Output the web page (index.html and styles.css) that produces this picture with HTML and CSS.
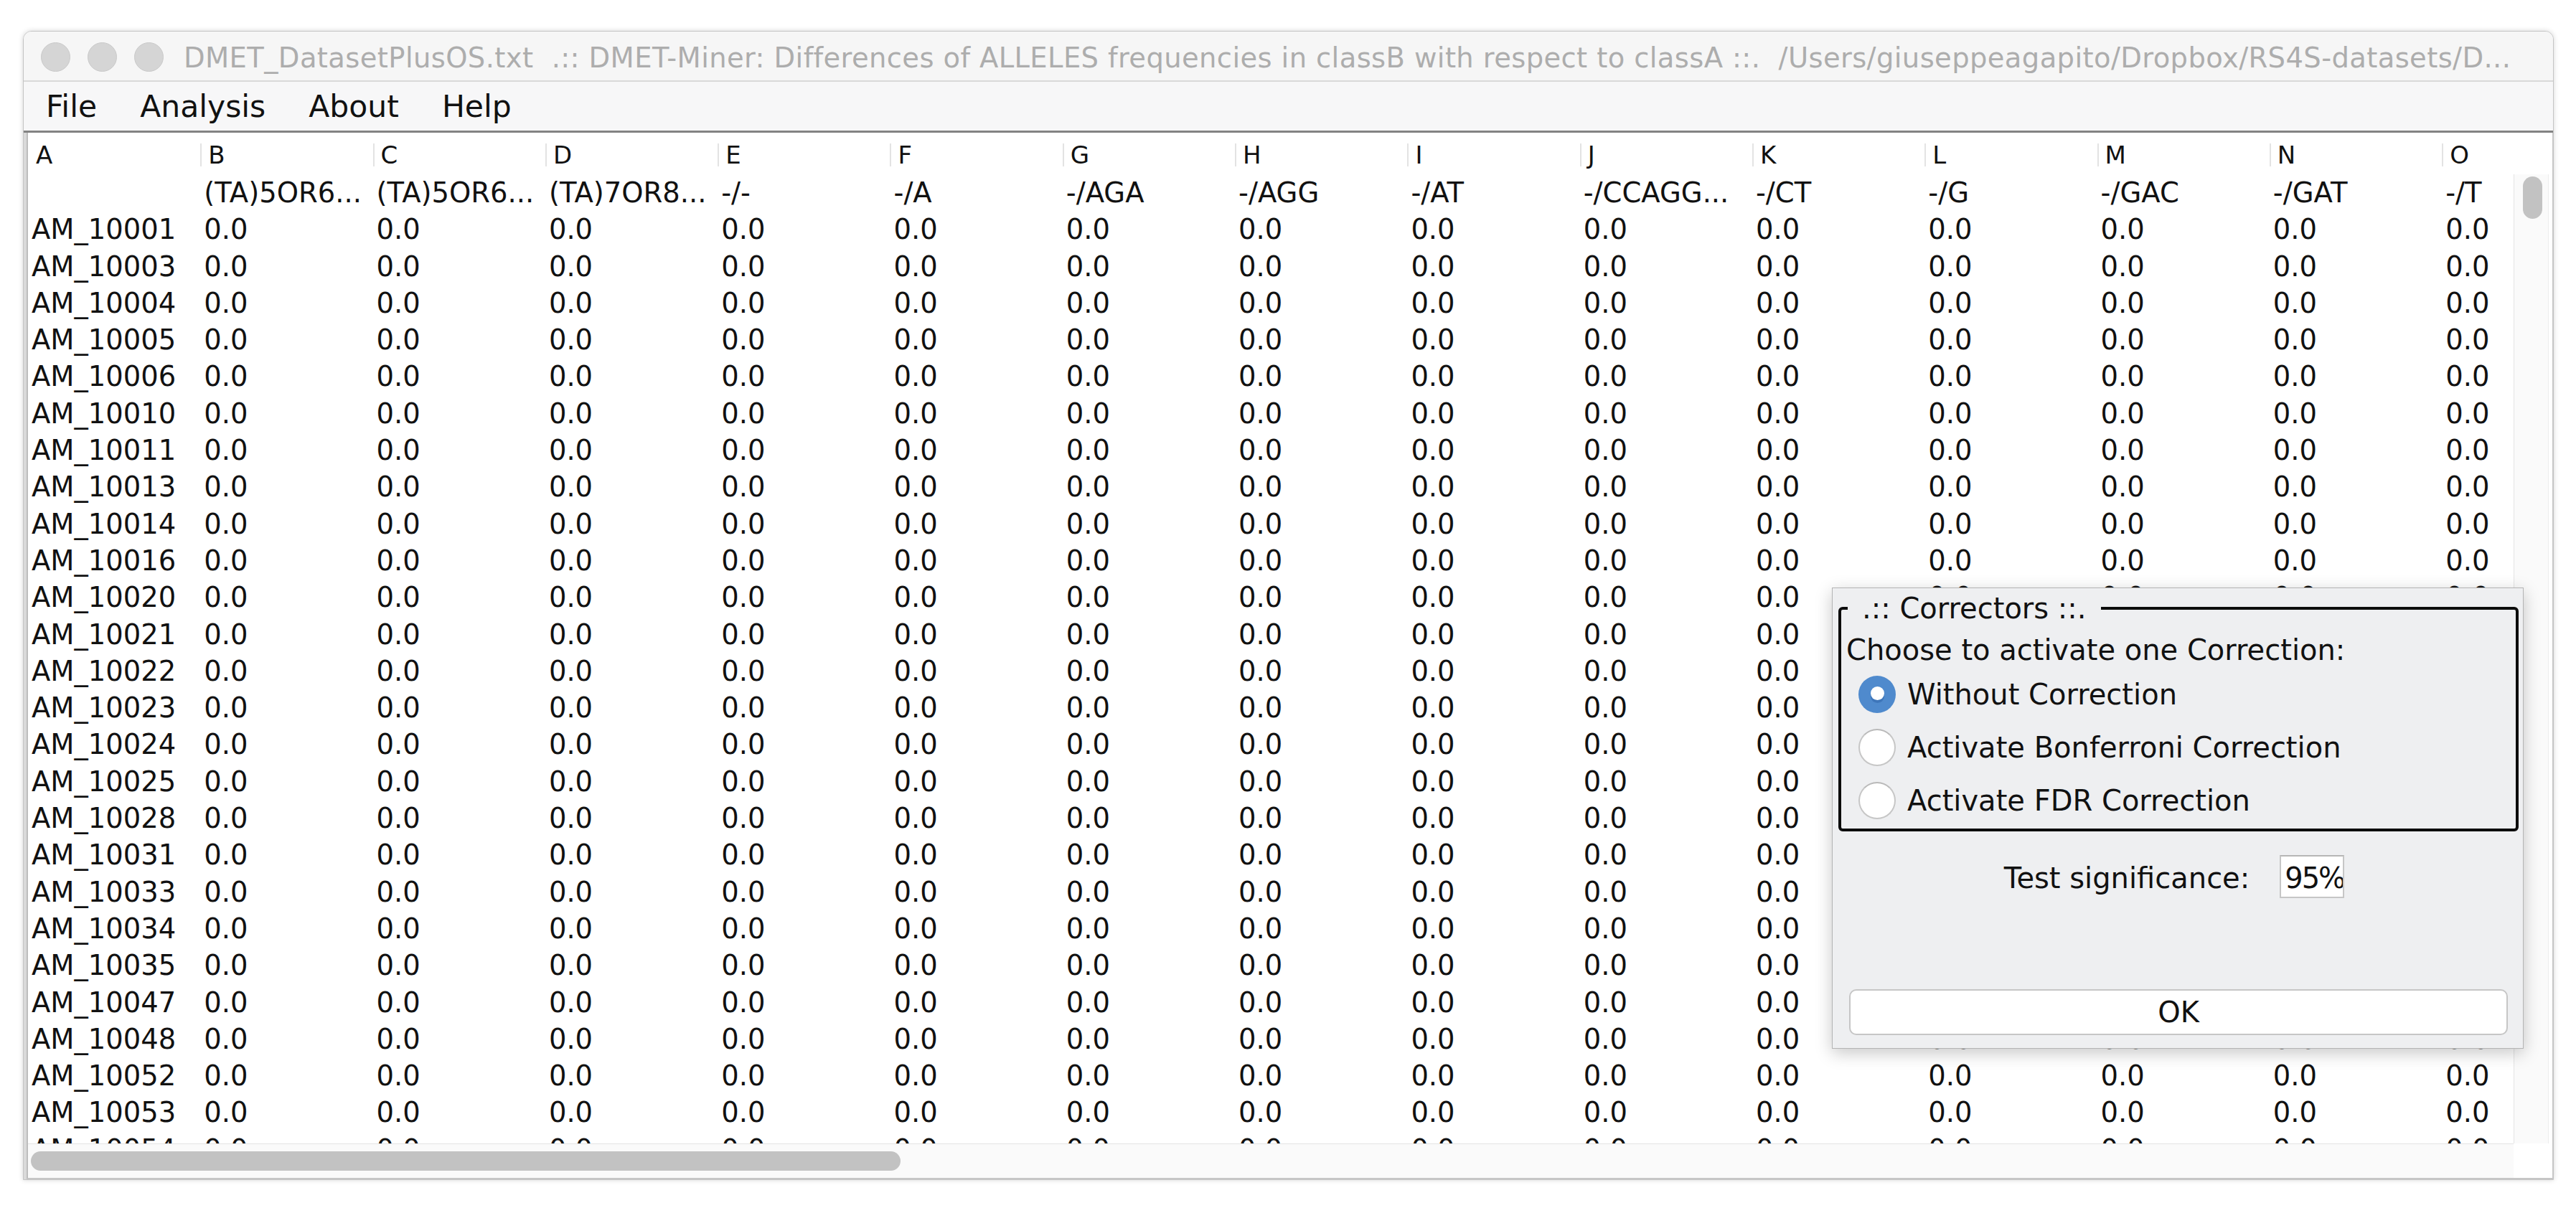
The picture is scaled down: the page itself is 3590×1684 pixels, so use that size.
FILE: index.html
```html
<!DOCTYPE html>
<html>
<head>
<meta charset="utf-8">
<link rel="stylesheet" href="styles.css">
</head>
<body>
<div class="window">
  <div class="titlebar">
    <div class="lights"><span class="light"></span><span class="light"></span><span class="light"></span></div>
    <div class="title">DMET_DatasetPlusOS.txt  .:: DMET-Miner: Differences of ALLELES frequencies in classB with respect to classA ::.  /Users/giuseppeagapito/Dropbox/RS4S-datasets/D...</div>
  </div>
  <div class="menubar">
    <span class="menu">File</span><span class="menu">Analysis</span><span class="menu">About</span><span class="menu">Help</span>
  </div>
  <div class="content">
    <div class="scrollpane">
      <div class="header">
        <div class="hcell">A</div><div class="hcell">B</div><div class="hcell">C</div><div class="hcell">D</div><div class="hcell">E</div><div class="hcell">F</div><div class="hcell">G</div><div class="hcell">H</div><div class="hcell">I</div><div class="hcell">J</div><div class="hcell">K</div><div class="hcell">L</div><div class="hcell">M</div><div class="hcell">N</div><div class="hcell">O</div>
      </div>
      <div class="body">
        <div class="viewport">
          <div class="row"><span class="cell"></span><span class="cell">(TA)5OR6...</span><span class="cell">(TA)5OR6...</span><span class="cell">(TA)7OR8...</span><span class="cell">-/-</span><span class="cell">-/A</span><span class="cell">-/AGA</span><span class="cell">-/AGG</span><span class="cell">-/AT</span><span class="cell">-/CCAGG...</span><span class="cell">-/CT</span><span class="cell">-/G</span><span class="cell">-/GAC</span><span class="cell">-/GAT</span><span class="cell">-/T</span></div>
          <div class="row"><span class="cell">AM_10001</span><span class="cell">0.0</span><span class="cell">0.0</span><span class="cell">0.0</span><span class="cell">0.0</span><span class="cell">0.0</span><span class="cell">0.0</span><span class="cell">0.0</span><span class="cell">0.0</span><span class="cell">0.0</span><span class="cell">0.0</span><span class="cell">0.0</span><span class="cell">0.0</span><span class="cell">0.0</span><span class="cell">0.0</span></div>
          <div class="row"><span class="cell">AM_10003</span><span class="cell">0.0</span><span class="cell">0.0</span><span class="cell">0.0</span><span class="cell">0.0</span><span class="cell">0.0</span><span class="cell">0.0</span><span class="cell">0.0</span><span class="cell">0.0</span><span class="cell">0.0</span><span class="cell">0.0</span><span class="cell">0.0</span><span class="cell">0.0</span><span class="cell">0.0</span><span class="cell">0.0</span></div>
          <div class="row"><span class="cell">AM_10004</span><span class="cell">0.0</span><span class="cell">0.0</span><span class="cell">0.0</span><span class="cell">0.0</span><span class="cell">0.0</span><span class="cell">0.0</span><span class="cell">0.0</span><span class="cell">0.0</span><span class="cell">0.0</span><span class="cell">0.0</span><span class="cell">0.0</span><span class="cell">0.0</span><span class="cell">0.0</span><span class="cell">0.0</span></div>
          <div class="row"><span class="cell">AM_10005</span><span class="cell">0.0</span><span class="cell">0.0</span><span class="cell">0.0</span><span class="cell">0.0</span><span class="cell">0.0</span><span class="cell">0.0</span><span class="cell">0.0</span><span class="cell">0.0</span><span class="cell">0.0</span><span class="cell">0.0</span><span class="cell">0.0</span><span class="cell">0.0</span><span class="cell">0.0</span><span class="cell">0.0</span></div>
          <div class="row"><span class="cell">AM_10006</span><span class="cell">0.0</span><span class="cell">0.0</span><span class="cell">0.0</span><span class="cell">0.0</span><span class="cell">0.0</span><span class="cell">0.0</span><span class="cell">0.0</span><span class="cell">0.0</span><span class="cell">0.0</span><span class="cell">0.0</span><span class="cell">0.0</span><span class="cell">0.0</span><span class="cell">0.0</span><span class="cell">0.0</span></div>
          <div class="row"><span class="cell">AM_10010</span><span class="cell">0.0</span><span class="cell">0.0</span><span class="cell">0.0</span><span class="cell">0.0</span><span class="cell">0.0</span><span class="cell">0.0</span><span class="cell">0.0</span><span class="cell">0.0</span><span class="cell">0.0</span><span class="cell">0.0</span><span class="cell">0.0</span><span class="cell">0.0</span><span class="cell">0.0</span><span class="cell">0.0</span></div>
          <div class="row"><span class="cell">AM_10011</span><span class="cell">0.0</span><span class="cell">0.0</span><span class="cell">0.0</span><span class="cell">0.0</span><span class="cell">0.0</span><span class="cell">0.0</span><span class="cell">0.0</span><span class="cell">0.0</span><span class="cell">0.0</span><span class="cell">0.0</span><span class="cell">0.0</span><span class="cell">0.0</span><span class="cell">0.0</span><span class="cell">0.0</span></div>
          <div class="row"><span class="cell">AM_10013</span><span class="cell">0.0</span><span class="cell">0.0</span><span class="cell">0.0</span><span class="cell">0.0</span><span class="cell">0.0</span><span class="cell">0.0</span><span class="cell">0.0</span><span class="cell">0.0</span><span class="cell">0.0</span><span class="cell">0.0</span><span class="cell">0.0</span><span class="cell">0.0</span><span class="cell">0.0</span><span class="cell">0.0</span></div>
          <div class="row"><span class="cell">AM_10014</span><span class="cell">0.0</span><span class="cell">0.0</span><span class="cell">0.0</span><span class="cell">0.0</span><span class="cell">0.0</span><span class="cell">0.0</span><span class="cell">0.0</span><span class="cell">0.0</span><span class="cell">0.0</span><span class="cell">0.0</span><span class="cell">0.0</span><span class="cell">0.0</span><span class="cell">0.0</span><span class="cell">0.0</span></div>
          <div class="row"><span class="cell">AM_10016</span><span class="cell">0.0</span><span class="cell">0.0</span><span class="cell">0.0</span><span class="cell">0.0</span><span class="cell">0.0</span><span class="cell">0.0</span><span class="cell">0.0</span><span class="cell">0.0</span><span class="cell">0.0</span><span class="cell">0.0</span><span class="cell">0.0</span><span class="cell">0.0</span><span class="cell">0.0</span><span class="cell">0.0</span></div>
          <div class="row"><span class="cell">AM_10020</span><span class="cell">0.0</span><span class="cell">0.0</span><span class="cell">0.0</span><span class="cell">0.0</span><span class="cell">0.0</span><span class="cell">0.0</span><span class="cell">0.0</span><span class="cell">0.0</span><span class="cell">0.0</span><span class="cell">0.0</span><span class="cell">0.0</span><span class="cell">0.0</span><span class="cell">0.0</span><span class="cell">0.0</span></div>
          <div class="row"><span class="cell">AM_10021</span><span class="cell">0.0</span><span class="cell">0.0</span><span class="cell">0.0</span><span class="cell">0.0</span><span class="cell">0.0</span><span class="cell">0.0</span><span class="cell">0.0</span><span class="cell">0.0</span><span class="cell">0.0</span><span class="cell">0.0</span><span class="cell">0.0</span><span class="cell">0.0</span><span class="cell">0.0</span><span class="cell">0.0</span></div>
          <div class="row"><span class="cell">AM_10022</span><span class="cell">0.0</span><span class="cell">0.0</span><span class="cell">0.0</span><span class="cell">0.0</span><span class="cell">0.0</span><span class="cell">0.0</span><span class="cell">0.0</span><span class="cell">0.0</span><span class="cell">0.0</span><span class="cell">0.0</span><span class="cell">0.0</span><span class="cell">0.0</span><span class="cell">0.0</span><span class="cell">0.0</span></div>
          <div class="row"><span class="cell">AM_10023</span><span class="cell">0.0</span><span class="cell">0.0</span><span class="cell">0.0</span><span class="cell">0.0</span><span class="cell">0.0</span><span class="cell">0.0</span><span class="cell">0.0</span><span class="cell">0.0</span><span class="cell">0.0</span><span class="cell">0.0</span><span class="cell">0.0</span><span class="cell">0.0</span><span class="cell">0.0</span><span class="cell">0.0</span></div>
          <div class="row"><span class="cell">AM_10024</span><span class="cell">0.0</span><span class="cell">0.0</span><span class="cell">0.0</span><span class="cell">0.0</span><span class="cell">0.0</span><span class="cell">0.0</span><span class="cell">0.0</span><span class="cell">0.0</span><span class="cell">0.0</span><span class="cell">0.0</span><span class="cell">0.0</span><span class="cell">0.0</span><span class="cell">0.0</span><span class="cell">0.0</span></div>
          <div class="row"><span class="cell">AM_10025</span><span class="cell">0.0</span><span class="cell">0.0</span><span class="cell">0.0</span><span class="cell">0.0</span><span class="cell">0.0</span><span class="cell">0.0</span><span class="cell">0.0</span><span class="cell">0.0</span><span class="cell">0.0</span><span class="cell">0.0</span><span class="cell">0.0</span><span class="cell">0.0</span><span class="cell">0.0</span><span class="cell">0.0</span></div>
          <div class="row"><span class="cell">AM_10028</span><span class="cell">0.0</span><span class="cell">0.0</span><span class="cell">0.0</span><span class="cell">0.0</span><span class="cell">0.0</span><span class="cell">0.0</span><span class="cell">0.0</span><span class="cell">0.0</span><span class="cell">0.0</span><span class="cell">0.0</span><span class="cell">0.0</span><span class="cell">0.0</span><span class="cell">0.0</span><span class="cell">0.0</span></div>
          <div class="row"><span class="cell">AM_10031</span><span class="cell">0.0</span><span class="cell">0.0</span><span class="cell">0.0</span><span class="cell">0.0</span><span class="cell">0.0</span><span class="cell">0.0</span><span class="cell">0.0</span><span class="cell">0.0</span><span class="cell">0.0</span><span class="cell">0.0</span><span class="cell">0.0</span><span class="cell">0.0</span><span class="cell">0.0</span><span class="cell">0.0</span></div>
          <div class="row"><span class="cell">AM_10033</span><span class="cell">0.0</span><span class="cell">0.0</span><span class="cell">0.0</span><span class="cell">0.0</span><span class="cell">0.0</span><span class="cell">0.0</span><span class="cell">0.0</span><span class="cell">0.0</span><span class="cell">0.0</span><span class="cell">0.0</span><span class="cell">0.0</span><span class="cell">0.0</span><span class="cell">0.0</span><span class="cell">0.0</span></div>
          <div class="row"><span class="cell">AM_10034</span><span class="cell">0.0</span><span class="cell">0.0</span><span class="cell">0.0</span><span class="cell">0.0</span><span class="cell">0.0</span><span class="cell">0.0</span><span class="cell">0.0</span><span class="cell">0.0</span><span class="cell">0.0</span><span class="cell">0.0</span><span class="cell">0.0</span><span class="cell">0.0</span><span class="cell">0.0</span><span class="cell">0.0</span></div>
          <div class="row"><span class="cell">AM_10035</span><span class="cell">0.0</span><span class="cell">0.0</span><span class="cell">0.0</span><span class="cell">0.0</span><span class="cell">0.0</span><span class="cell">0.0</span><span class="cell">0.0</span><span class="cell">0.0</span><span class="cell">0.0</span><span class="cell">0.0</span><span class="cell">0.0</span><span class="cell">0.0</span><span class="cell">0.0</span><span class="cell">0.0</span></div>
          <div class="row"><span class="cell">AM_10047</span><span class="cell">0.0</span><span class="cell">0.0</span><span class="cell">0.0</span><span class="cell">0.0</span><span class="cell">0.0</span><span class="cell">0.0</span><span class="cell">0.0</span><span class="cell">0.0</span><span class="cell">0.0</span><span class="cell">0.0</span><span class="cell">0.0</span><span class="cell">0.0</span><span class="cell">0.0</span><span class="cell">0.0</span></div>
          <div class="row"><span class="cell">AM_10048</span><span class="cell">0.0</span><span class="cell">0.0</span><span class="cell">0.0</span><span class="cell">0.0</span><span class="cell">0.0</span><span class="cell">0.0</span><span class="cell">0.0</span><span class="cell">0.0</span><span class="cell">0.0</span><span class="cell">0.0</span><span class="cell">0.0</span><span class="cell">0.0</span><span class="cell">0.0</span><span class="cell">0.0</span></div>
          <div class="row"><span class="cell">AM_10052</span><span class="cell">0.0</span><span class="cell">0.0</span><span class="cell">0.0</span><span class="cell">0.0</span><span class="cell">0.0</span><span class="cell">0.0</span><span class="cell">0.0</span><span class="cell">0.0</span><span class="cell">0.0</span><span class="cell">0.0</span><span class="cell">0.0</span><span class="cell">0.0</span><span class="cell">0.0</span><span class="cell">0.0</span></div>
          <div class="row"><span class="cell">AM_10053</span><span class="cell">0.0</span><span class="cell">0.0</span><span class="cell">0.0</span><span class="cell">0.0</span><span class="cell">0.0</span><span class="cell">0.0</span><span class="cell">0.0</span><span class="cell">0.0</span><span class="cell">0.0</span><span class="cell">0.0</span><span class="cell">0.0</span><span class="cell">0.0</span><span class="cell">0.0</span><span class="cell">0.0</span></div>
          <div class="row"><span class="cell">AM_10054</span><span class="cell">0.0</span><span class="cell">0.0</span><span class="cell">0.0</span><span class="cell">0.0</span><span class="cell">0.0</span><span class="cell">0.0</span><span class="cell">0.0</span><span class="cell">0.0</span><span class="cell">0.0</span><span class="cell">0.0</span><span class="cell">0.0</span><span class="cell">0.0</span><span class="cell">0.0</span><span class="cell">0.0</span></div>
        </div>
        <div class="vscroll"><div class="vtrack"><div class="vthumb"></div></div></div>
      </div>
      <div class="hbar">
        <div class="htrack"><div class="hthumb"></div></div>
        <div class="hcorner"></div>
      </div>
    </div>
  </div>

  <div class="dialog">
    <fieldset class="group">
      <legend>.:: Correctors ::.</legend>
      <div class="choose">Choose to activate one Correction:</div>
      <div class="radio-row"><span class="radio on"><span class="dot"></span></span><span class="rlabel">Without Correction</span></div>
      <div class="radio-row"><span class="radio off"></span><span class="rlabel">Activate Bonferroni Correction</span></div>
      <div class="radio-row"><span class="radio off"></span><span class="rlabel">Activate FDR Correction</span></div>
    </fieldset>
    <div class="sig-row">
      <span class="sig-label">Test significance:</span>
      <span class="sig-field">95%</span>
    </div>
    <div class="ok">OK</div>
  </div>
</div>
</body>
</html>
```
FILE: styles.css
```css
* { box-sizing: border-box; }
html, body { margin: 0; padding: 0; background: #ffffff; }
body {
  width: 3590px;
  height: 1684px;
  overflow: hidden;
  font-family: "DejaVu Sans", "Noto Sans", sans-serif;
  color: #111111;
}

.window {
  position: relative;
  margin: 43px 0 0 32px;
  width: 3527px;
  height: 1602px;
  border: 1px solid #c4c4c4;
  border-radius: 12px 12px 0 0;
  display: flex;
  flex-direction: column;
  background: #f6f6f6;
  box-shadow: 0 0 7px rgba(0, 0, 0, 0.16);
}

/* title bar */
.titlebar {
  flex: none;
  height: 70px;
  padding: 3px 0 0 24px;
  border-bottom: 2px solid #d9d9d9;
  border-radius: 11px 11px 0 0;
  background: #f6f6f6;
  display: flex;
  align-items: center;
}
.lights { display: flex; gap: 24px; flex: none; }
.light {
  width: 41px;
  height: 41px;
  border-radius: 50%;
  background: #d5d5d5;
  border: 1px solid #cacaca;
}
.title {
  margin-left: 28px;
  padding-top: 1px;
  font-family: "DejaVu Sans", sans-serif;
  font-size: 38.5px;
  letter-spacing: 0.38px;
  color: #adadad;
  white-space: pre;
  overflow: hidden;
}

/* menu bar */
.menubar {
  flex: none;
  height: 71px;
  padding: 2px 0 0 1px;
  border-bottom: 3px solid #838383;
  background: #f7f7f8;
  display: flex;
}
.menu {
  padding: 0 30px;
  font-size: 42.5px;
  line-height: 66px;
  color: #111;
}

/* table area */
.content {
  flex: 1;
  min-height: 0;
  display: flex;
  padding-left: 4px;
  background: #dadada;
}
.scrollpane {
  flex: 1;
  min-width: 0;
  display: flex;
  flex-direction: column;
  background: #ffffff;
  border-left: 2px solid #bdbdbd;
  border-right: 1px solid #c8c8c8;
  border-bottom: 2px solid #c6c6c6;
}
.header {
  flex: none;
  height: 58px;
  padding-top: 15px;
  display: flex;
  overflow: hidden;
}
.hcell {
  flex: none;
  width: 240.3px;
  height: 32px;
  border-left: 2px solid #e3e3e3;
  padding-left: 9px;
  font-size: 34px;
  line-height: 32px;
  white-space: nowrap;
}
.hcell:first-child { border-left-color: transparent; }

.body {
  flex: 1;
  min-height: 0;
  display: flex;
}
.viewport {
  flex: 1;
  min-width: 0;
  overflow: hidden;
}
.row {
  display: flex;
  height: 51.3px;
}
.cell {
  flex: none;
  width: 240.3px;
  padding-left: 5px;
  font-size: 38.5px;
  line-height: 51.3px;
  white-space: nowrap;
  overflow: hidden;
}

.vscroll {
  flex: none;
  width: 54px;
  padding-right: 5px;
}
.vtrack {
  height: 100%;
  background: #fafafa;
  border-left: 1px solid #e4e4e4;
  border-right: 1px solid #ececec;
  padding: 3px 0 0 12px;
}
.vthumb {
  width: 27px;
  height: 59px;
  border-radius: 14px;
  background: #c2c2c2;
}

.hbar {
  flex: none;
  height: 48px;
  display: flex;
}
.htrack {
  flex: 1;
  background: #fafafa;
  border-top: 1px solid #e4e4e4;
  padding: 10px 0 0 4px;
}
.hthumb {
  width: 1212px;
  height: 27px;
  border-radius: 14px;
  background: #c2c2c2;
}
.hcorner {
  flex: none;
  width: 54px;
  background: #ffffff;
}

/* dialog */
.dialog {
  position: absolute;
  left: 2520px;
  top: 775px;
  width: 964px;
  height: 643px;
  background: #eeeff1;
  border: 1px solid #b4b4b4;
  box-shadow: 0 6px 22px rgba(0, 0, 0, 0.22);
  display: flex;
  flex-direction: column;
  font-size: 40px;
  color: #111;
}
.group {
  margin: 5px 6px 0 8px;
  padding: 10px 7px 2px 7px;
  border: 4px solid #0c0c0c;
  border-radius: 6px;
  min-width: 0;
}
.group legend {
  margin-left: 2px;
  padding: 0 20px;
  font-size: 40px;
  line-height: normal;
}
.choose {
  line-height: 50px;
  white-space: nowrap;
}
.radio-row {
  display: flex;
  align-items: center;
  height: 74px;
}
.radio {
  flex: none;
  width: 52px;
  height: 52px;
  border-radius: 50%;
  margin: 0 16px 0 17px;
}
.radio.on {
  background: #4f8acd;
  display: flex;
  align-items: center;
  justify-content: center;
}
.dot {
  width: 19px;
  height: 19px;
  border-radius: 50%;
  background: #ffffff;
  margin-top: -3px;
  box-shadow: 0 4px 0 #3e76ba;
}
.radio.off {
  background: #ffffff;
  border: 2px solid #c6c6c6;
  border-top-color: #b9b9b9;
}
.rlabel {
  line-height: 74px;
  white-space: nowrap;
}
.sig-row {
  flex: none;
  display: flex;
  justify-content: center;
  align-items: center;
  gap: 42px;
  height: 60px;
  margin-top: 33px;
  padding-right: 10px;
}
.sig-label { white-space: nowrap; padding-top: 4px; }
.sig-field {
  width: 90px;
  height: 60px;
  background: #ffffff;
  border: 2px solid #c6c6c6;
  border-top-color: #b6b6b6;
  padding: 3px 0 0 5px;
  font-size: 40px;
  line-height: 54px;
  letter-spacing: -2px;
  white-space: nowrap;
  overflow: hidden;
}
.ok {
  flex: none;
  margin: auto 21px 18px 23px;
  height: 64px;
  background: #ffffff;
  border: 2px solid #c6c6c6;
  border-radius: 10px;
  text-align: center;
  font-size: 40px;
  line-height: 60px;
}
```
